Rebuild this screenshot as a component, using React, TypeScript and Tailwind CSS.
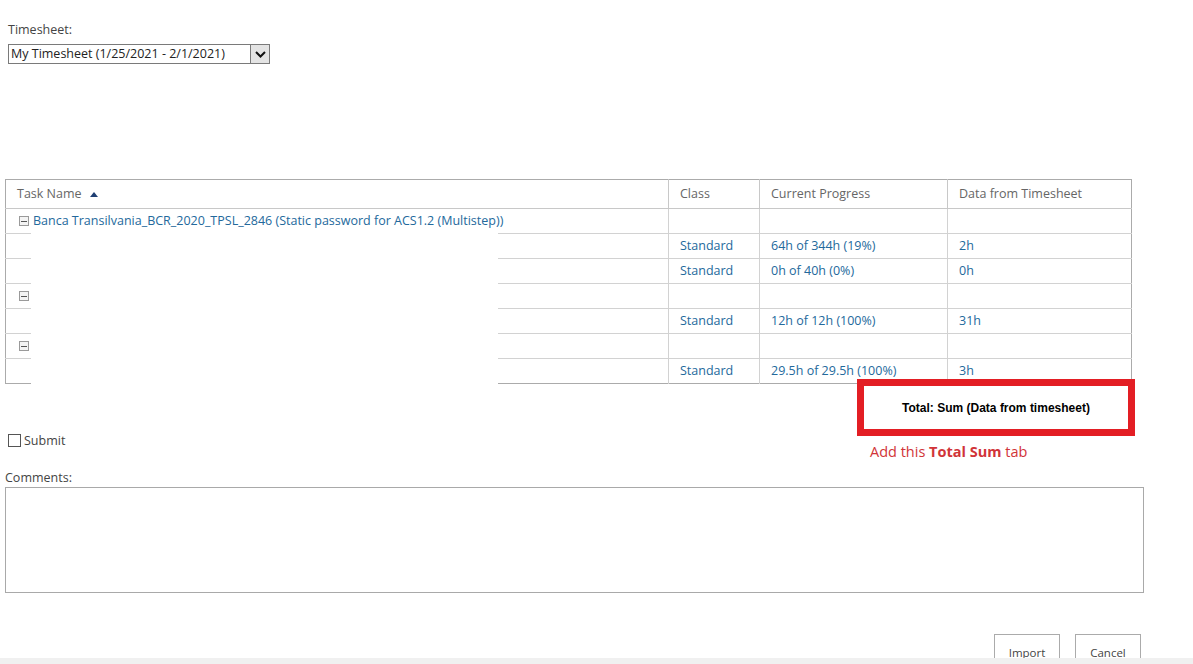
import React from "react";

const rows = [
  { parent: true, name: "Banca Transilvania_BCR_2020_TPSL_2846 (Static password for ACS1.2 (Multistep))", cls: "", progress: "", data: "" },
  { parent: false, name: "Implementation and testing", cls: "Standard", progress: "64h of 344h (19%)", data: "2h" },
  { parent: false, name: "Project management", cls: "Standard", progress: "0h of 40h (0%)", data: "0h" },
  { parent: true, name: "BCR_2020_TPSL_2901 (3DS Server upgrade)", cls: "", progress: "", data: "" },
  { parent: false, name: "Analysis and support", cls: "Standard", progress: "12h of 12h (100%)", data: "31h" },
  { parent: true, name: "BCR_2020_TPSL_2955 (E-commerce acquiring)", cls: "", progress: "", data: "" },
  { parent: false, name: "RAIFF-489_BCR e-commerce acquiring", cls: "Standard", progress: "29.5h of 29.5h (100%)", data: "3h" },
];

function Collapse() {
  return (
    <span className="mr-[4px] inline-flex h-[10px] w-[10px] shrink-0 items-center justify-center border border-[#9a9a9a] bg-[#f4f4f4]">
      <span className="h-px w-[6px] bg-[#555]" />
    </span>
  );
}

function App() {
  return (
    <div className="relative h-[664px] overflow-hidden bg-white font-['Open_Sans',sans-serif] text-[12.5px] text-[#444]">
      <div className="pl-[8px] pt-[21px]">
        <div className="leading-[18px]">Timesheet:</div>
        <div className="mt-[5px] flex h-[20px] w-[262px] items-center border border-[#7a7a7a]">
          <span className="flex-1 pl-[2px] leading-[18px] text-[#222]">My Timesheet (1/25/2021 - 2/1/2021)</span>
          <span className="flex h-[18px] w-[19px] items-center justify-center border-l border-[#7a7a7a] bg-[#e4e4e4]">
            <svg width="11" height="7" viewBox="0 0 11 7">
              <path d="M1 1 L5.5 5.5 L10 1" fill="none" stroke="#111" strokeWidth="2" />
            </svg>
          </span>
        </div>
      </div>

      <div className="relative ml-[5px] mt-[115px] w-[1127px]">
        <table className="w-full table-fixed border-collapse border border-[#ababab]">
          <colgroup>
            <col className="w-[663px]" />
            <col className="w-[91px]" />
            <col className="w-[188px]" />
            <col className="w-[184px]" />
          </colgroup>
          <thead>
            <tr className="h-[29px] border-b border-[#c8c8c8] text-left text-[#666]">
              <th className="pl-[11px] font-normal">
                <span className="inline-flex items-center gap-[8px]">
                  Task Name
                  <svg width="8" height="5" viewBox="0 0 8 5">
                    <path d="M0 5 L4 0 L8 5 Z" fill="#1f3f73" />
                  </svg>
                </span>
              </th>
              <th className="border-l border-[#c8c8c8] pl-[11px] font-normal">Class</th>
              <th className="border-l border-[#c8c8c8] pl-[11px] font-normal">Current Progress</th>
              <th className="border-l border-[#c8c8c8] pl-[11px] font-normal">Data from Timesheet</th>
            </tr>
          </thead>
          <tbody className="text-[#23699c]">
            {rows.map((r, i) => (
              <tr key={i} className={"h-[25px] " + (i < rows.length - 1 ? "border-b border-[#d2d2d2]" : "")}>
                <td className="overflow-hidden whitespace-nowrap">
                  {r.parent ? (
                    <span className="flex items-center pl-[13px]">
                      <Collapse />
                      {r.name}
                    </span>
                  ) : (
                    <span className="block pl-[31px]">{r.name}</span>
                  )}
                </td>
                <td className="border-l border-[#d2d2d2] pl-[11px]">{r.cls}</td>
                <td className="border-l border-[#d2d2d2] pl-[11px]">{r.progress}</td>
                <td className="border-l border-[#d2d2d2] pl-[11px]">{r.data}</td>
              </tr>
            ))}
          </tbody>
        </table>
        <div className="absolute left-[26px] top-[50px] h-[155px] w-[467px] bg-white" />
      </div>

      <div className="ml-[8px] mt-[50px] flex items-center">
        <span className="h-[13px] w-[13px] border border-[#555] bg-white" />
        <span className="ml-[3px] leading-[13px]">Submit</span>
      </div>

      <div className="ml-[5px] mt-[23px] leading-[16px]">Comments:</div>
      <div className="ml-[5px] mt-[1px] h-[106px] w-[1139px] border border-[#a9a9a9]" />

      <div className="mr-[52px] mt-[41px] flex justify-end gap-[15px]">
        <button className="h-[32px] w-[66px] border border-[#ababab] bg-white pt-[6px] text-[11.5px] text-[#444]">Import</button>
        <button className="h-[32px] w-[66px] border border-[#ababab] bg-white pt-[6px] text-[11.5px] text-[#444]">Cancel</button>
      </div>

      <div className="absolute bottom-0 left-0 h-[6px] w-full bg-[#f0f0f0]" />

      <div className="absolute left-[857px] top-[379px] flex h-[57px] w-[278px] items-center justify-center border-[7px] border-[#e31e24] bg-white font-['Liberation_Sans',sans-serif] text-[12px] font-bold text-black">
        Total: Sum (Data from timesheet)
      </div>
      <div className="absolute left-[870px] top-[441px] text-[14.5px] text-[#d13438]">
        Add this <span className="font-bold">Total Sum</span> tab
      </div>
    </div>
  );
}

export default App;
